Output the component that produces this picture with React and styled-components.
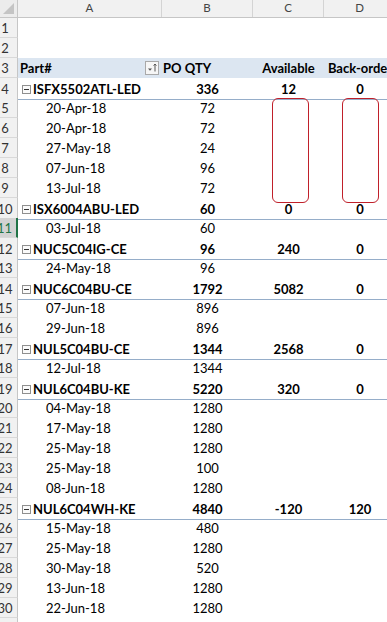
import React from 'react';
import styled, { createGlobalStyle } from 'styled-components';

const cols = '18px 144px 91px 71px 72px';

const rows = [
	{ n: 4, a: 'ISFX5502ATL-LED', b: '336', c: '12', d: '0', group: true },
	{ n: 5, a: '20-Apr-18', b: '72' },
	{ n: 6, a: '20-Apr-18', b: '72' },
	{ n: 7, a: '27-May-18', b: '24' },
	{ n: 8, a: '07-Jun-18', b: '96' },
	{ n: 9, a: '13-Jul-18', b: '72' },
	{ n: 10, a: 'ISX6004ABU-LED', b: '60', c: '0', d: '0', group: true },
	{ n: 11, a: '03-Jul-18', b: '60' },
	{ n: 12, a: 'NUC5C04IG-CE', b: '96', c: '240', d: '0', group: true },
	{ n: 13, a: '24-May-18', b: '96' },
	{ n: 14, a: 'NUC6C04BU-CE', b: '1792', c: '5082', d: '0', group: true },
	{ n: 15, a: '07-Jun-18', b: '896' },
	{ n: 16, a: '29-Jun-18', b: '896' },
	{ n: 17, a: 'NUL5C04BU-CE', b: '1344', c: '2568', d: '0', group: true },
	{ n: 18, a: '12-Jul-18', b: '1344' },
	{ n: 19, a: 'NUL6C04BU-KE', b: '5220', c: '320', d: '0', group: true },
	{ n: 20, a: '04-May-18', b: '1280' },
	{ n: 21, a: '17-May-18', b: '1280' },
	{ n: 22, a: '25-May-18', b: '1280' },
	{ n: 23, a: '25-May-18', b: '100' },
	{ n: 24, a: '08-Jun-18', b: '1280' },
	{ n: 25, a: 'NUL6C04WH-KE', b: '4840', c: '-120', d: '120', group: true },
	{ n: 26, a: '15-May-18', b: '480' },
	{ n: 27, a: '25-May-18', b: '1280' },
	{ n: 28, a: '30-May-18', b: '520' },
	{ n: 29, a: '13-Jun-18', b: '1280' },
	{ n: 30, a: '22-Jun-18', b: '1280' },
	{ n: 31 },
];

const FilterIcon = () => (
	<svg width="14" height="14" viewBox="0 0 14 14">
		<rect x="0.5" y="0.5" width="13" height="13" fill="#f6f6f6" stroke="#a9a9a9" />
		<polygon points="3,7.5 7,7.5 5,9.8" fill="#555" />
		<line x1="10" y1="3" x2="10" y2="10.5" stroke="#555" strokeWidth="1" />
		<polyline points="8.6,4.6 10,3 11.4,4.6" fill="none" stroke="#555" strokeWidth="1" />
	</svg>
);

export default function App() {
	return (
		<>
			<GlobalStyle />
			<Sheet>
				<Row $head>
					<Corner>
						<svg width="11" height="11" viewBox="0 0 11 11">
							<polygon points="11,0 11,11 0,11" fill="#c4c4c4" />
						</svg>
					</Corner>
					{['A', 'B', 'C', 'D'].map(l => (
						<ColLabel key={l}>{l}</ColLabel>
					))}
				</Row>
				<Row>
					<RowNum>1</RowNum>
				</Row>
				<Row>
					<RowNum>2</RowNum>
				</Row>
				<Row>
					<RowNum>3</RowNum>
					<Cell $bold $header $align="left" $pad={2}>
						Part#
						<FilterBox>
							<FilterIcon />
						</FilterBox>
					</Cell>
					<Cell $bold $header $align="left" $pad={1}>PO QTY</Cell>
					<Cell $bold $header>Available</Cell>
					<Cell $bold $header>Back-order</Cell>
				</Row>
				{rows.map(r => (
					<Row key={r.n}>
						<RowNum $active={r.n === 11}>{r.n}</RowNum>
						<Cell $bold={r.group} $group={r.group} $align="left" $pad={r.group ? 4 : 28}>
							{r.group && <Collapse />}
							{r.a}
						</Cell>
						<Cell $bold={r.group} $group={r.group}>{r.b}</Cell>
						<Cell $bold={r.group} $group={r.group}>{r.c}</Cell>
						<Cell $bold={r.group} $group={r.group}>{r.d}</Cell>
					</Row>
				))}
				<Callout style={{ left: 272 }} />
				<Callout style={{ left: 342 }} />
			</Sheet>
		</>
	);
}

const GlobalStyle = createGlobalStyle`
	html, body {
		margin: 0;
		padding: 0;
		background: #fff;
		overflow: hidden;
	}
	body {
		font-family: Lato, "Liberation Sans", sans-serif;
		color: #000;
	}
`;

const Sheet = styled.div`
	position: relative;
	width: 396px;
	height: 622px;
	overflow: hidden;
`;

const Row = styled.div`
	display: grid;
	grid-template-columns: ${cols};
	height: ${p => (p.$head ? '18px' : '20px')};
	background: ${p => (p.$head ? '#f1f1f1' : 'transparent')};
	border-bottom: ${p => (p.$head ? '1px solid #c6c6c6' : 'none')};
	box-sizing: border-box;
`;

const Corner = styled.div`
	display: flex;
	align-items: flex-end;
	justify-content: flex-end;
	padding: 0 3px 3px 0;
	border-right: 1px solid #c6c6c6;
	background: #ececec;
`;

const ColLabel = styled.div`
	display: flex;
	align-items: center;
	justify-content: center;
	font-size: 11.5px;
	color: #444;
	border-right: 1px solid #d4d4d4;
	padding-bottom: 2px;
	box-sizing: border-box;
`;

const RowNum = styled.div`
	display: flex;
	align-items: center;
	justify-content: center;
	padding-right: 7px;
	font-size: 13px;
	color: ${p => (p.$active ? '#217346' : '#333')};
	background: ${p => (p.$active ? '#d3d3d3' : '#f1f1f1')};
	border-right: ${p => (p.$active ? '2px solid #217346' : '1px solid #c6c6c6')};
	border-bottom: 1px solid #d9d9d9;
	box-sizing: border-box;
	overflow: visible;
	white-space: nowrap;
`;

const Cell = styled.div`
	display: flex;
	align-items: center;
	justify-content: ${p => (p.$align === 'left' ? 'flex-start' : 'center')};
	padding-left: ${p => (p.$pad != null ? `${p.$pad}px` : '0')};
	font-size: 13px;
	font-weight: ${p => (p.$bold ? 700 : 400)};
	line-height: 20px;
	white-space: nowrap;
	background: ${p => (p.$header ? '#dce6f1' : 'transparent')};
	border-bottom: ${p => (p.$group ? '1px solid #95adc9' : 'none')};
	box-sizing: border-box;
	padding-top: ${p => (p.$group ? '1px' : '0')};
`;

const FilterBox = styled.span`
	display: flex;
	margin-left: auto;
	margin-right: 3px;
`;

const Collapse = styled.span`
	position: relative;
	width: 9px;
	height: 9px;
	margin-right: 2px;
	border: 1px solid #8f8f8f;
	background: #fafafa;
	box-sizing: border-box;
	&::after {
		content: '';
		position: absolute;
		left: 1px;
		right: 1px;
		top: 3px;
		height: 1px;
		background: #333;
	}
`;

const Callout = styled.div`
	position: absolute;
	top: 98px;
	width: 37px;
	height: 105px;
	border: 1.5px solid #c0202a;
	border-radius: 6px;
	box-sizing: border-box;
`;
